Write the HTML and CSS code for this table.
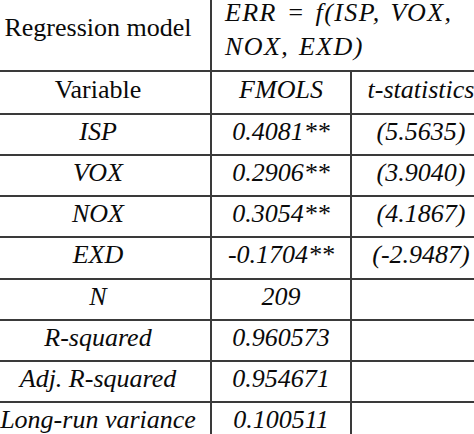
FILE: index.html
```html
<!DOCTYPE html>
<html lang="en">
<head>
<meta charset="utf-8">
<title>FMOLS regression results</title>
<link rel="stylesheet" href="styles.css">
</head>
<body>
<table class="results">
  <colgroup>
    <col class="c-label">
    <col class="c-coef">
    <col class="c-stat">
  </colgroup>
  <tr class="model-row">
    <th class="label">Regression model</th>
    <th class="eq" colspan="2"><i>ERR = f(ISP, VOX,<br>NOX, EXD)</i></th>
  </tr>
  <tr class="head-row">
    <th>Variable</th>
    <th><i>FMOLS</i></th>
    <th><i>t-statistics</i></th>
  </tr>
  <tr><td><i>ISP</i></td><td><i>0.4081**</i></td><td><i>(5.5635)</i></td></tr>
  <tr><td><i>VOX</i></td><td><i>0.2906**</i></td><td><i>(3.9040)</i></td></tr>
  <tr><td><i>NOX</i></td><td><i>0.3054**</i></td><td><i>(4.1867)</i></td></tr>
  <tr><td><i>EXD</i></td><td><i>-0.1704**</i></td><td><i>(-2.9487)</i></td></tr>
  <tr><td><i>N</i></td><td><i>209</i></td><td></td></tr>
  <tr><td><i>R-squared</i></td><td><i>0.960573</i></td><td></td></tr>
  <tr><td><i>Adj. R-squared</i></td><td><i>0.954671</i></td><td></td></tr>
  <tr><td><i>Long-run variance</i></td><td><i>0.100511</i></td><td></td></tr>
</table>
</body>
</html>
```
FILE: styles.css
```css
html, body {
  margin: 0;
  padding: 0;
  background: #ffffff;
  overflow: hidden;
}

body {
  font-family: "Liberation Serif", "Times New Roman", serif;
  font-size: 26px;
  color: #0a0a0a;
}

.results {
  font-family: "Liberation Serif", "Times New Roman", serif;
  font-size: 26px;
  border-collapse: collapse;
  table-layout: fixed;
  width: 506px;
  margin-top: -16px;
  margin-left: -16px;
}

.c-label { width: 226px; }
.c-coef { width: 140px; }
.c-stat { width: 140px; }

.results th,
.results td {
  border: 2px solid #3a3a3a;
  padding: 0 0 5px 0;
  text-align: center;
  vertical-align: middle;
  font-weight: normal;
  line-height: 34px;
  height: 34.15px;
  white-space: nowrap;
}

.results i {
  font-style: italic;
}

.model-row th {
  height: 84px;
  padding: 0;
}

.model-row .eq {
  text-align: left;
  height: 80px;
  padding: 4px 0 0 13px;
  letter-spacing: 1.4px;
  word-spacing: 2px;
}

.head-row th {
  height: 36px;
}
```
